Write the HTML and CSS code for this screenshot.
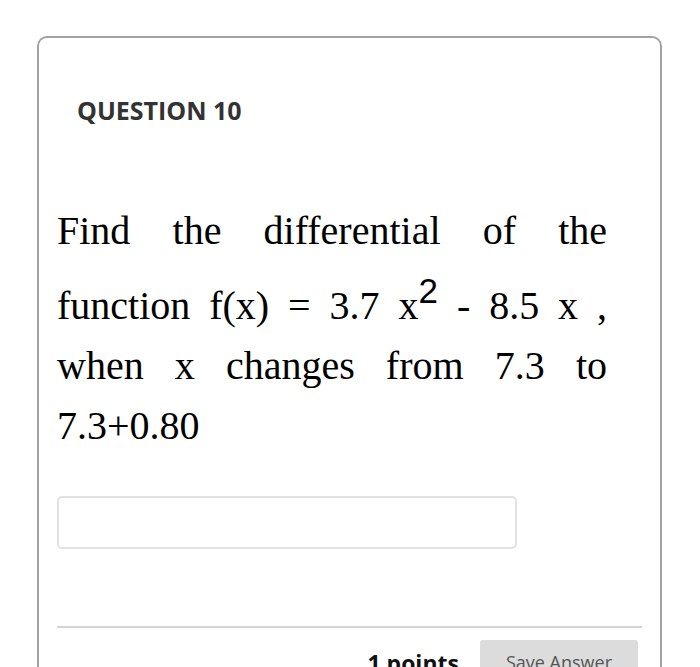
FILE: index.html
```html
<!DOCTYPE html>
<html lang="en">
<head>
<meta charset="utf-8">
<title>Question 10</title>
<link rel="stylesheet" href="styles.css">
</head>
<body>
<div class="card">
  <h3 class="q-header">QUESTION 10</h3>
  <p class="q-text">Find the differential of the function f(x) = 3.7 x<sup class="sup">2</sup> - 8.5 x , when x changes from 7.3 to 7.3+0.80</p>
  <input class="answer" type="text" aria-label="Answer">
  <hr class="divider">
  <div class="footer">
    <span class="points">1 points</span>
    <button class="save" type="button">Save Answer</button>
  </div>
</div>
</body>
</html>
```

FILE: styles.css
```css
html, body {
  margin: 0;
  padding: 0;
  overflow: hidden;
  background: #fff;
}

body {
  font-family: "Open Sans", "Liberation Sans", sans-serif;
}

.card {
  box-sizing: border-box;
  margin: 36px 0 0 37px;
  width: 625px;
  min-height: 700px;
  border: 2px solid #a2a2a2;
  border-bottom: none;
  border-radius: 10px 10px 0 0;
  padding: 0 18px;
}

.q-header {
  margin: 55px 0 0 0;
  padding-left: 20px;
  font-family: "Open Sans", sans-serif;
  font-weight: 700;
  font-size: 25px;
  line-height: 34px;
  color: #333;
}

.q-text {
  margin: 74px 0 0 0;
  width: 550px;
  font-family: "Liberation Serif", "Times New Roman", serif;
  font-size: 40px;
  line-height: 60px;
  text-align: justify;
  color: #000;
}

.sup {
  font-family: "Liberation Sans", Arial, sans-serif;
  font-size: 35px;
  line-height: 60px;
  vertical-align: 16px;
}

.answer {
  display: block;
  box-sizing: border-box;
  margin: 40px 0 0 0;
  width: 460px;
  height: 53px;
  border: 2px solid #e2e2e2;
  border-radius: 5px;
  background: #fff;
  outline: none;
}

.divider {
  margin: 77px 0 0 0;
  border: none;
  height: 2px;
  background: #d4d4d4;
}

.footer {
  display: flex;
  justify-content: flex-end;
  align-items: flex-start;
  gap: 21px;
  margin-top: 12px;
  padding-right: 4px;
}

.points {
  margin-top: 8px;
  font-family: "Open Sans", sans-serif;
  font-weight: 700;
  font-size: 23px;
  line-height: 30px;
  color: #111;
}

.save {
  border: none;
  border-radius: 3px;
  background: #dcdcdc;
  color: #555;
  font-family: "Open Sans", sans-serif;
  font-size: 18px;
  line-height: 26px;
  padding: 9px 26px 10px;
}
```
